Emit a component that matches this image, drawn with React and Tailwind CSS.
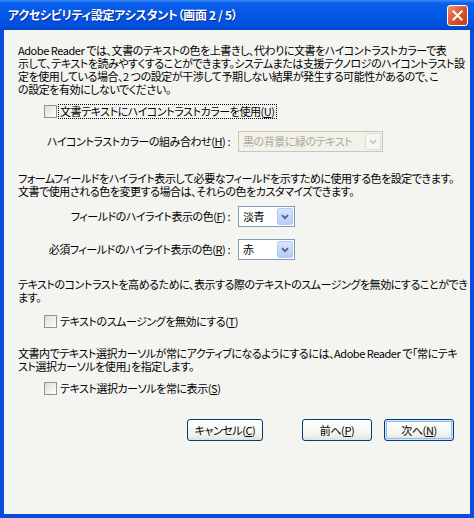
import React from "react";

// Japanese UI text stack
const jp = "font-['Noto_Sans_CJK_JP','Noto_Sans',sans-serif] [font-feature-settings:'palt']";

// Underlined mnemonic, e.g. (U)
const Key = ({ k }) => (
  <span>
    (<span className="underline underline-offset-1">{k}</span>)
  </span>
);

const Lines = ({ lines, className = "" }) => (
  <div className={`leading-[13px] ${className}`}>
    {lines.map((l, i) => (
      <div key={i} className="whitespace-nowrap">
        {l}
      </div>
    ))}
  </div>
);

const Checkbox = ({ label, k, focused, className = "" }) => (
  <div className={`flex items-center h-[15px] ml-[26px] ${className}`}>
    <div className="w-[13px] h-[13px] border border-[#8f9499] bg-[linear-gradient(135deg,#dcdcd7,#ffffff)]" />
    <div
      className={`ml-[1px] px-[1px] leading-[13px] border ${
        focused ? "border-dotted border-black" : "border-transparent"
      }`}
    >
      {label}
      <Key k={k} />
    </div>
  </div>
);

const Chevron = ({ color }) => (
  <svg width="8" height="6" viewBox="0 0 8 6">
    <path d="M1 1.2 L4 4.2 L7 1.2" fill="none" stroke={color} strokeWidth="1.8" />
  </svg>
);

const Select = ({ value, width, disabled }) => (
  <div
    className={`flex items-stretch h-[21px] border ${
      disabled ? "border-[#c9c7ba] bg-[#f3f2ea] text-[#aca899]" : "border-[#7f9db9] bg-white text-black"
    }`}
    style={{ width }}
  >
    <div className="flex-1 flex items-center pl-[4px] whitespace-nowrap overflow-hidden">{value}</div>
    <div
      className={`m-[1px] w-[16px] rounded-[2px] flex items-center justify-center ${
        disabled
          ? "bg-[#f7f6f1] border border-[#e1dfd5]"
          : "bg-[linear-gradient(to_bottom,#d9e5fd,#b7cbf8)] border border-[#b9ccf5]"
      }`}
    >
      <Chevron color={disabled ? "#c9c7ba" : "#4d6185"} />
    </div>
  </div>
);

const FieldRow = ({ label, k, value, width, disabled, className = "" }) => (
  <div className={`flex items-center ${className}`}>
    <div className="w-[212px] text-right whitespace-nowrap">
      {label}
      <Key k={k} /> :
    </div>
    <div className="ml-[8px]">
      <Select value={value} width={width} disabled={disabled} />
    </div>
  </div>
);

const Button = ({ label, k, width, isDefault }) => (
  <button
    className={`h-[22px] rounded-[3px] border border-[#003c74] bg-[linear-gradient(to_bottom,#ffffff,#f3f3ef_70%,#e3e2da)] text-black leading-none ${
      isDefault ? "shadow-[inset_0_0_0_1px_#cee7ff,inset_0_0_0_2px_#98b8ea]" : ""
    }`}
    style={{ width }}
  >
    {label}
    <Key k={k} />
  </button>
);

const App = () => {
  return (
    <div className={`w-[474px] h-[518px] flex flex-col bg-[#0a4ddc] text-[11px] tracking-[-0.45px] text-black ${jp}`}>
      {/* Title bar */}
      <div className="h-[30px] flex items-center justify-between pl-[8px] pr-[6px] bg-[linear-gradient(to_bottom,#3b8cf7_0%,#0a60ec_10%,#0256e6_55%,#0050df_85%,#0344c9_100%)]">
        <span className="text-white font-bold text-[12px] tracking-[-0.3px] [text-shadow:1px_1px_0_#0a2b8c] whitespace-nowrap">
          アクセシビリティ設定アシスタント（画面 2 / 5）
        </span>
        <div className="w-[21px] h-[21px] rounded-[3px] border border-white bg-[linear-gradient(135deg,#f0906e,#d9512a_55%,#c23d17)] flex items-center justify-center">
          <svg width="11" height="11" viewBox="0 0 11 11">
            <path d="M1.5 1.5 L9.5 9.5 M9.5 1.5 L1.5 9.5" stroke="white" strokeWidth="2" strokeLinecap="square" />
          </svg>
        </div>
      </div>

      {/* Dialog body */}
      <div className="flex-1 mx-[4px] mb-[4px] bg-[#f4f4f1] pl-[14px] pr-[16px] pt-[14px] flex flex-col">
        <Lines
          lines={[
            "Adobe Reader では、文書のテキストの色を上書きし、代わりに文書をハイコントラストカラーで表",
            "示して、テキストを読みやすくすることができます。システムまたは支援テクノロジのハイコントラスト設",
            "定を使用している場合、2 つの設定が干渉して予期しない結果が発生する可能性があるので、こ",
            "の設定を有効にしないでください。",
          ]}
        />
        <Checkbox label="文書テキストにハイコントラストカラーを使用" k="U" focused className="mt-[8px]" />
        <FieldRow
          label="ハイコントラストカラーの組み合わせ"
          k="H"
          value="黒の背景に緑のテキスト"
          width={145}
          disabled
          className="mt-[12px]"
        />

        <Lines
          className="mt-[20px]"
          lines={[
            "フォームフィールドをハイライト表示して必要なフィールドを示すために使用する色を設定できます。",
            "文書で使用される色を変更する場合は、それらの色をカスタマイズできます。",
          ]}
        />
        <FieldRow label="フィールドのハイライト表示の色" k="F" value="淡青" width={57} className="mt-[8px]" />
        <FieldRow label="必須フィールドのハイライト表示の色" k="R" value="赤" width={57} className="mt-[12px]" />

        <Lines
          className="mt-[18px]"
          lines={["テキストのコントラストを高めるために、表示する際のテキストのスムージングを無効にすることができ", "ます。"]}
        />
        <Checkbox label="テキストのスムージングを無効にする" k="T" className="mt-[10px]" />

        <Lines
          className="mt-[18px]"
          lines={[
            "文書内でテキスト選択カーソルが常にアクティブになるようにするには、Adobe Reader で「常にテキ",
            "スト選択カーソルを使用」を指定します。",
          ]}
        />
        <Checkbox label="テキスト選択カーソルを常に表示" k="S" className="mt-[8px]" />

        {/* Buttons */}
        <div className="mt-[23px] flex justify-end">
          <Button label="キャンセル" k="C" width={76} />
          <div className="w-[39px]" />
          <Button label="前へ" k="P" width={70} />
          <div className="w-[12px]" />
          <Button label="次へ" k="N" width={70} isDefault />
        </div>
      </div>
    </div>
  );
};

export default App;
